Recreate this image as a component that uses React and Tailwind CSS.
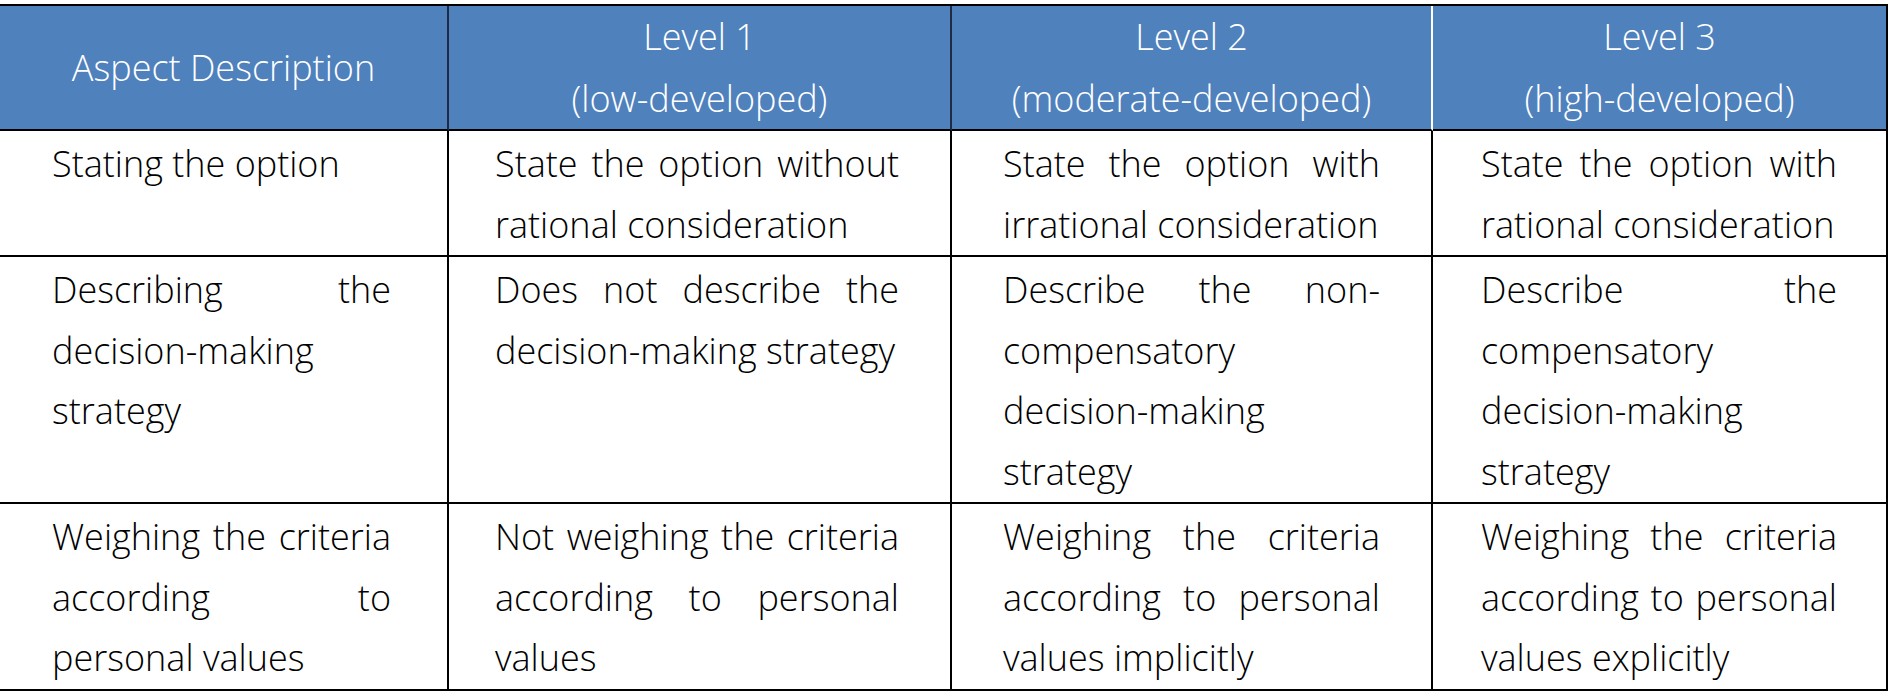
import React from "react";

const rows = [
  [
    ["Stating the option"],
    ["State the option without", "rational consideration"],
    ["State the option with", "irrational consideration"],
    ["State the option with", "rational consideration"],
  ],
  [
    ["Describing the", "decision-making", "strategy"],
    ["Does not describe the", "decision-making strategy"],
    ["Describe the non-", "compensatory", "decision-making", "strategy"],
    ["Describe the", "compensatory", "decision-making", "strategy"],
  ],
  [
    ["Weighing the criteria", "according to", "personal values"],
    ["Not weighing the criteria", "according to personal", "values"],
    ["Weighing the criteria", "according to personal", "values implicitly"],
    ["Weighing the criteria", "according to personal", "values explicitly"],
  ],
];

const cellPad = [
  "pl-[52px] pr-[56px]",
  "pl-[46px] pr-[51px]",
  "pl-[51px] pr-[51px]",
  "pl-[48px] pr-[49px]",
];

const cellBorder = [
  "border-r-2 border-black",
  "border-r-2 border-black",
  "border-r-2 border-black",
  "",
];

function Lines({ lines }) {
  return (
    <div>
      {lines.map((line, i) => {
        const last = i === lines.length - 1;
        if (last) {
          return (
            <div key={i} className="whitespace-nowrap">
              {line}
            </div>
          );
        }
        const words = line.split(" ");
        return (
          <div key={i} className="flex justify-between whitespace-nowrap">
            {words.map((w, j) => (
              <span key={j}>{w}</span>
            ))}
          </div>
        );
      })}
    </div>
  );
}

export default function App() {
  const headers = [
    ["Aspect Description"],
    ["Level 1", "(low-developed)"],
    ["Level 2", "(moderate-developed)"],
    ["Level 3", "(high-developed)"],
  ];
  const headerBorder = [
    "border-r-2 border-[#1f2a44]",
    "border-r-2 border-[#1f2a44]",
    "border-r-2 border-white",
    "",
  ];
  return (
    <div className="w-[1888px] h-[700px] bg-white pt-[4px] font-['Open_Sans',sans-serif] font-light text-[36px] text-black">
      <div className="border-t-2 border-r-2 border-black grid grid-cols-[449px_503px_481px_453px]">
        {headers.map((h, i) => (
          <div
            key={i}
            className={`bg-[#4f81bd] text-white border-b-2 border-b-black h-[125px] leading-[61.5px] flex flex-col items-center justify-center text-center ${headerBorder[i]}`}
          >
            {h.map((t, j) => (
              <div key={j} className="whitespace-nowrap">
                {t}
              </div>
            ))}
          </div>
        ))}
        {rows.map((row, r) =>
          row.map((cell, c) => (
            <div
              key={`${r}-${c}`}
              className={`border-b-2 border-black pt-[3px] leading-[60.5px] ${cellBorder[c]} ${cellPad[c]}`}
            >
              <Lines lines={cell} />
            </div>
          ))
        )}
      </div>
    </div>
  );
}
